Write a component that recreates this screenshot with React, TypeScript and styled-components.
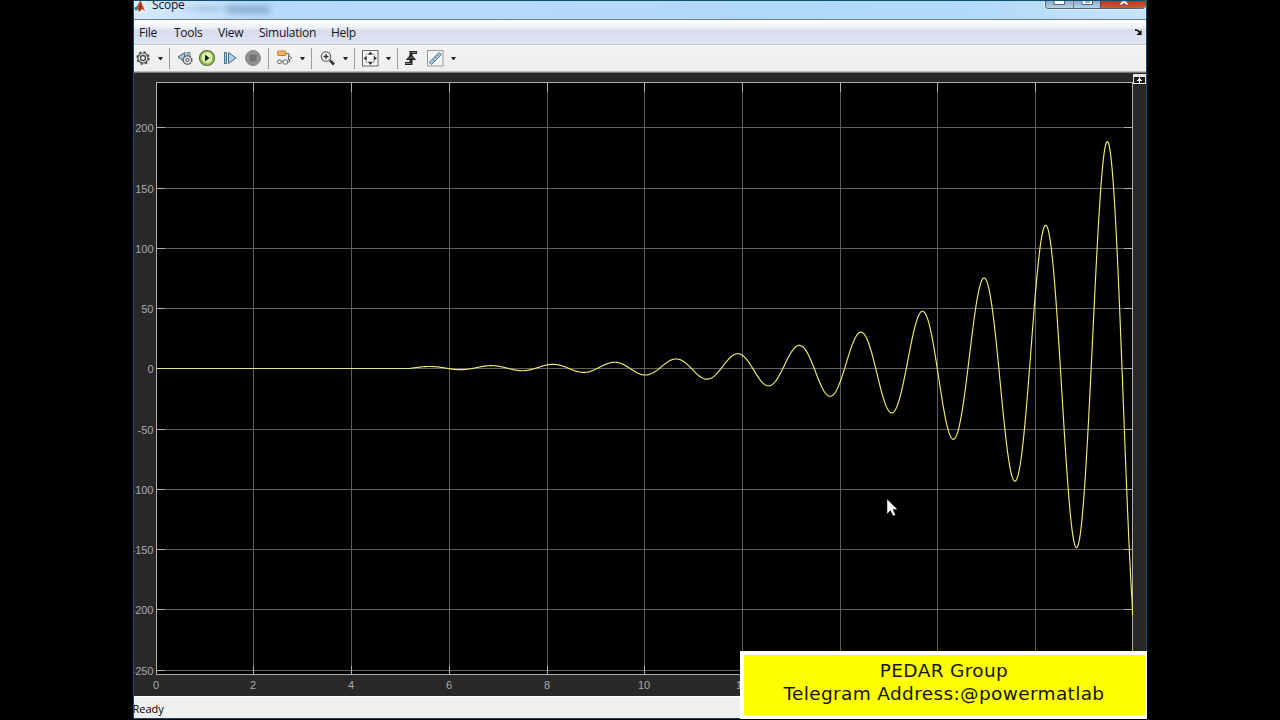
import React from "react";
import styled, { createGlobalStyle } from "styled-components";

const Global = createGlobalStyle`
  * { box-sizing: border-box; }
  body { margin: 0; background: #000; overflow: hidden; }
`;

const Stage = styled.div`
  position: relative;
  width: 1280px;
  height: 720px;
  padding-left: 133px;
  background: #000;
  overflow: hidden;
`;

const Window = styled.div`
  display: flex;
  flex-direction: column;
  width: 1014px;
  height: 719px;
  border: 1px solid #0d4f73;
  border-bottom-color: #17425f;
  background: #282828;
  overflow: hidden;
`;

const TitleBar = styled.div`
  display: flex;
  align-items: flex-start;
  height: 18px;
  flex: none;
  background:
    radial-gradient(ellipse 28px 6px at 72px 8px, #7292b04d, transparent),
    linear-gradient(90deg, #d5e9fb 0, #b9dafa 130px, #b2d8f8 600px, #b4daf9 860px, #c7e3fa 100%);
`;

const AppIcon = styled.svg`
  flex: none;
  margin-top: -1px;
`;

const Title = styled.div`
  font: 12px/14px "Open Sans", "Noto Sans", sans-serif;
  letter-spacing: -0.2px;
  color: #10151c;
  margin: -3px 0 0 6px;
`;

const Blur = styled.div`
  width: 44px;
  height: 7px;
  margin: 5px auto 0 41px;
  border-radius: 3px;
  background: #6f97ba;
  filter: blur(3px);
  opacity: 0.75;
`;

const Controls = styled.div`
  display: flex;
  height: 8px;
  border: 1px solid #4c6378;
  border-top: 0;
  border-right: 0;
  border-radius: 0 0 4px 4px;
  overflow: hidden;
  box-shadow: 0 0 1px 1px #e2f1fd;
`;

const Control = styled.div<{ $close?: boolean }>`
  display: flex;
  justify-content: center;
  width: ${(p) => (p.$close ? 46 : 27)}px;
  background: ${(p) =>
    p.$close ? "linear-gradient(#b43a26, #d3573c)" : "linear-gradient(#8fabc7, #b7d1e8)"};
  border-left: ${(p) => (p.$close ? "1px solid #6e3a3a" : "0")};
  & + &:nth-child(2) { border-left: 1px solid #6b859d; }
`;

const MenuBar = styled.div`
  display: flex;
  align-items: center;
  height: 26px;
  flex: none;
  padding: 1px 4px 0 5px;
  border-top: 1px solid #6e7f90;
  border-bottom: 1px solid #c9c9cc;
  background: linear-gradient(#ffffff 0, #eef0f9 8px, #d8dced 10px, #dfe3f2 100%);
  font: 12px/16px "Open Sans", "Noto Sans", sans-serif;
  color: #16161e;
`;

const MenuItem = styled.div<{ $w: number }>`
  width: ${(p) => p.$w}px;
  letter-spacing: -0.25px;
  white-space: nowrap;
`;

const DockIcon = styled.svg`
  margin-left: auto;
`;

const ToolBar = styled.div`
  display: flex;
  align-items: center;
  height: 27px;
  flex: none;
  padding-bottom: 1px;
  border-top: 1px solid #fff;
  background: linear-gradient(#f3f3f3, #eeeeee);
  border-bottom: 1px solid #bdbdbd;
`;

const Tool = styled.svg<{ $gap?: number }>`
  flex: none;
  margin-left: ${(p) => p.$gap ?? 0}px;
`;

const Caret = styled.div<{ $gap: number }>`
  width: 5px;
  height: 3px;
  margin-left: ${(p) => p.$gap}px;
  border: 2.5px solid transparent;
  border-top: 3px solid #222;
  border-bottom: 0;
`;

const Divider = styled.div<{ $gap: number }>`
  width: 1px;
  height: 21px;
  margin-left: ${(p) => p.$gap}px;
  background: #9c9c9c;
`;

const Plot = styled.svg`
  display: block;
  flex: none;
  border-top: 1px solid #777;
  text {
    font: 11px "Liberation Sans", Arial, sans-serif;
    fill: #a9a9a9;
  }
`;

const StatusBar = styled.div`
  flex: 1;
  background: #efefef;
  border-top: 1px solid #fff;
  font: 11px/23px "Open Sans", "Noto Sans", sans-serif;
  color: #000;
  text-indent: -1.5px;
`;

const Banner = styled.div`
  position: absolute;
  left: 740px;
  top: 651px;
  width: 407px;
  height: 68px;
  border: 4px solid #fff;
  border-right-width: 2px;
  padding-top: 4px;
  background: #ffff00;
  color: #141400;
  text-align: center;
  font: 18.5px/23px "DejaVu Sans", Verdana, sans-serif;
`;

const BannerLine = styled.div<{ $s: number }>`
  letter-spacing: ${(p) => p.$s}px;
  white-space: nowrap;
  padding-right: 1px;
`;

const Pointer = styled.svg`
  position: absolute;
  left: 885px;
  top: 497px;
`;

const gridX = [253, 351, 449, 547, 644, 742, 840, 937, 1035];
const gridY = [127, 188, 248, 308, 368, 429, 489, 549, 609, 670];
const labelX = [156, 253, 351, 449, 547, 644, 742];

const signal = (() => {
  const period = 61.6;
  const w = (2 * Math.PI) / period;
  const points: string[] = [];
  for (let x = 410; x <= 1132.4; x += 0.5) {
    const d = x - 1107.3;
    const y = 367.9 - 227 * Math.exp(0.00749 * d) * Math.cos(w * d + 0.0733);
    points.push(`${x},${y.toFixed(2)}`);
  }
  return `M${points.join(" ")} L1132.6,615`;
})();

function ScopePlot() {
  return (
    <Plot width="1012" height="624" viewBox="134 73 1012 623">
      <rect x="134" y="73" width="1012" height="623" fill="#282828" />
      <rect x="156" y="82" width="977" height="593" fill="#000" />
      <g stroke="#606060" shapeRendering="crispEdges">
        {gridX.map((x) => <path key={x} d={`M${x + 0.5},83V674`} />)}
        {gridY.map((y) => <path key={y} d={`M157,${y + 0.5}H1132`} />)}
      </g>
      <g stroke="#b0b0b0" shapeRendering="crispEdges">
        {gridX.map((x) => <path key={x} d={`M${x + 0.5},83v9M${x + 0.5},666v8`} />)}
        {gridY.map((y) => <path key={y} d={`M157,${y + 0.5}h8M1124,${y + 0.5}h8`} />)}
        <path d="M156.5,82.5H1132.5V674.5H156.5Z" fill="none" />
      </g>
      <path d="M157,368.5H410" stroke="#e6e67c" shapeRendering="crispEdges" />
      <path d={signal} fill="none" stroke="#eded72" strokeWidth="1.15" strokeLinejoin="round" />
      {gridY.map((y, i) => (
        <text key={y} x="153.5" y={y + 5} textAnchor="end">{200 - i * 50}</text>
      ))}
      {labelX.map((x, i) => (
        <text key={x} x={x} y="689" textAnchor="middle">{i * 2}</text>
      ))}
      <g shapeRendering="crispEdges">
        <rect x="1133" y="74" width="13" height="10" fill="#e8e8e8" />
        <rect x="1134" y="77" width="11" height="6" fill="#1c1c1c" />
        <path d="M1139.5,77v6M1138,79.5h3M1137,80.5h5" stroke="#fff" />
      </g>
    </Plot>
  );
}

export default function App() {
  return (
    <Stage>
      <Global />
      <Window>
        <TitleBar>
          <AppIcon width="12" height="13" viewBox="0 0 12 13">
            <rect width="12" height="13" fill="#e9eef2" />
            <path d="M0 8L3 6L6 1L4 9L2 11Z" fill="#3d7f9c" />
            <path d="M3 8L6.500 0L11 11L8 9L5 12Z" fill="#c94a1c" />
            <path d="M6.500 1L7 9L5 11Z" fill="#7c2a18" />
          </AppIcon>
          <Title>Scope</Title>
          <Blur />
          <Controls>
            <Control>
              <svg width="13" height="5"><path d="M1 0V3.500H11.500V0" fill="#fff" stroke="#53677b" /></svg>
            </Control>
            <Control>
              <svg width="13" height="5"><path d="M1 0V3.500H11.500V0" fill="#fff" stroke="#53677b" /><path d="M4 1H9" stroke="#53677b" /></svg>
            </Control>
            <Control $close>
              <svg width="14" height="5"><path d="M2 4L5 0H9L12 4H9L7 2L5 4Z" fill="#fff" stroke="#6a2c2c" strokeWidth=".6" /></svg>
            </Control>
          </Controls>
        </TitleBar>
        <MenuBar>
          <MenuItem $w={35}>File</MenuItem>
          <MenuItem $w={44}>Tools</MenuItem>
          <MenuItem $w={41}>View</MenuItem>
          <MenuItem $w={72}>Simulation</MenuItem>
          <MenuItem $w={40}>Help</MenuItem>
          <DockIcon width="7" height="7" viewBox="0 0 7 7">
            <path d="M0 1.200Q2.500 .2 4.500 3.200" stroke="#000" strokeWidth="1.600" fill="none" />
            <path d="M6.500 1V6H1.500Z" fill="#000" />
          </DockIcon>
        </MenuBar>
        <ToolBar>
          <Tool width="16" height="16" viewBox="0 0 16 16" $gap={1}>
            <circle cx="8" cy="8" r="6" fill="none" stroke="#555" strokeWidth="1.600" strokeDasharray="2.350 2.350" />
            <circle cx="8" cy="8" r="5" fill="#f2f2f2" stroke="#505050" strokeWidth="1.200" />
            <circle cx="8" cy="8" r="2.500" fill="#fff" stroke="#444" strokeWidth="1.300" />
          </Tool>
          <Caret $gap={7} />
          <Divider $gap={6} />
          <Tool width="16" height="16" viewBox="0 0 16 16" $gap={7}>
            <path d="M8 2.500L1 7L7 11.500Z" fill="#a9cadd" stroke="#3e6078" />
            <path d="M10 2.500h3v7h-3z" fill="#a9cadd" stroke="#53758a" strokeWidth=".8" />
            <circle cx="10.500" cy="10" r="4.300" fill="#d8dcdf" stroke="#4d565d" strokeWidth="1.400" strokeDasharray="2 .7" />
            <circle cx="10.500" cy="10" r="1.500" fill="#fff" stroke="#444" />
          </Tool>
          <Tool width="18" height="18" viewBox="0 0 18 18" $gap={5}>
            <circle cx="9" cy="9" r="7.500" fill="#9cc45c" stroke="#53702f" strokeWidth="1.200" />
            <circle cx="9" cy="8.500" r="5.300" fill="#dff0bd" />
            <path d="M7 5.500L11.500 9L7 12.500Z" fill="#122407" />
          </Tool>
          <Tool width="14" height="14" viewBox="0 0 14 14" $gap={7}>
            <path d="M1.500 1.500h2v11h-2zM5.500 1.500L13 7L5.500 12.500Z" fill="#acd0e6" stroke="#406e8e" />
          </Tool>
          <Tool width="18" height="18" viewBox="0 0 18 18" $gap={7}>
            <circle cx="9" cy="9" r="7.500" fill="#929292" stroke="#878787" />
            <rect x="5.500" y="5.500" width="7" height="7" fill="#727272" />
          </Tool>
          <Divider $gap={6} />
          <Tool width="18" height="18" viewBox="0 0 18 18" $gap={7}>
            <path d="M10 4.500H13V7M12 13H13.500V11" stroke="#666" fill="none" />
            <rect x="1.700" y="2" width="8" height="4.500" rx=".5" fill="#f9b468" stroke="#cc7421" />
            <path d="M5 12.500h2" stroke="#666" />
            <rect x="1.700" y="11" width="3.500" height="3.500" rx="1" fill="#fff" stroke="#666" />
            <rect x="7" y="11" width="4.500" height="4" rx="1" fill="#fff" stroke="#666" />
            <path d="M12.500 6.500L15.800 8.800L12.500 11Z" stroke="#666" fill="#fff" />
          </Tool>
          <Caret $gap={6} />
          <Divider $gap={6} />
          <Tool width="16" height="16" viewBox="0 0 16 16" $gap={8}>
            <circle cx="6" cy="6.500" r="4.700" fill="#f5f8f9" stroke="#666" strokeWidth="1.200" />
            <path d="M3.500 6.500h5M6 4v5" stroke="#333" strokeWidth="1.300" />
            <path d="M10 10.500L14 14.500" stroke="#333" strokeWidth="2.500" />
          </Tool>
          <Caret $gap={7} />
          <Divider $gap={6} />
          <Tool width="17" height="17" viewBox="0 0 17 17" $gap={7}>
            <rect x=".5" y=".5" width="15.500" height="15.500" fill="#fafafa" stroke="#666" />
            <path d="M8.300 1.500L10.800 4.800H5.800ZM8.300 15L10.800 11.700H5.800ZM1.500 8.300L4.800 5.800V10.800ZM15 8.300L11.700 5.800V10.800Z" fill="#333" />
            <path d="M3.500 5.500L5.500 3.500M13 5.500L11 3.500M3.500 11L5.500 13M13 11L11 13" stroke="#777" strokeWidth=".9" />
          </Tool>
          <Caret $gap={7} />
          <Divider $gap={6} />
          <Tool width="14" height="16" viewBox="0 0 14 16" $gap={6}>
            <path d="M1 13.500H7V2.500H13" fill="none" stroke="#222" strokeWidth="3" />
            <path d="M7 4.500L11.500 9.500H2.500Z" fill="#444" stroke="#111" strokeWidth=".8" />
            <path d="M7.500 2.500H12.500M1.500 13.500H7" stroke="#999" strokeWidth=".9" />
          </Tool>
          <Tool width="17" height="17" viewBox="0 0 17 17" $gap={9}>
            <rect x=".5" y=".5" width="15.500" height="15.500" fill="#f4f4f4" stroke="#999" />
            <path d="M2 12.500L12 2.500L14.500 4.500L4.500 14.500Z" fill="#a6c8db" stroke="#5d7e92" />
            <path d="M5.500 9.500l1.200 1.200M8 7l1.200 1.200M10.500 4.500l1.200 1.200" stroke="#42667d" />
          </Tool>
          <Caret $gap={7} />
        </ToolBar>
        <ScopePlot />
        <StatusBar>Ready</StatusBar>
      </Window>
      <Pointer width="18" height="22" viewBox="0 0 18 22">
        <path d="M2 2V17L5.500 13.500L8 19L10.500 18L8 12.500H12.500Z" fill="#fff" stroke="#222" strokeWidth=".5" />
      </Pointer>
      <Banner>
        <BannerLine $s={0.35}>PEDAR Group</BannerLine>
        <BannerLine $s={0.35}>Telegram Address:@powermatlab</BannerLine>
      </Banner>
    </Stage>
  );
}
